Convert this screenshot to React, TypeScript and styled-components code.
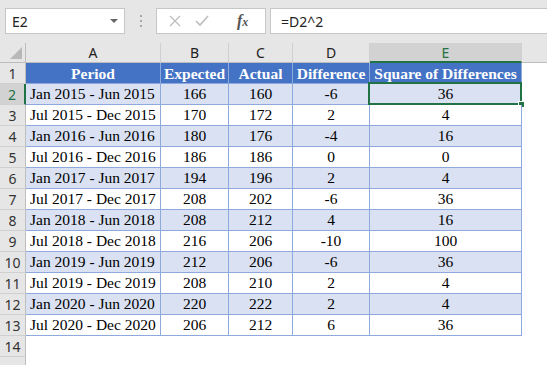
import React from "react";
import styled, { createGlobalStyle } from "styled-components";

const GlobalStyle = createGlobalStyle`
  html, body { margin: 0; padding: 0; background: #fff; }
  body { width: 547px; height: 365px; overflow: hidden; }
`;

const green = "#217346";
const gridBlue = "#8ea9db";
const headGray = "#e6e6e6";

const cols = [
  { key: "A", width: 135 },
  { key: "B", width: 68 },
  { key: "C", width: 64 },
  { key: "D", width: 77 },
  { key: "E", width: 152 },
];

const headers = ["Period", "Expected", "Actual", "Difference", "Square of Differences"];

const data: [string, number, number, number, number][] = [
  ["Jan 2015 - Jun 2015", 166, 160, -6, 36],
  ["Jul 2015 - Dec 2015", 170, 172, 2, 4],
  ["Jan 2016 - Jun 2016", 180, 176, -4, 16],
  ["Jul 2016 - Dec 2016", 186, 186, 0, 0],
  ["Jan 2017 - Jun 2017", 194, 196, 2, 4],
  ["Jul 2017 - Dec 2017", 208, 202, -6, 36],
  ["Jan 2018 - Jun 2018", 208, 212, 4, 16],
  ["Jul 2018 - Dec 2018", 216, 206, -10, 100],
  ["Jan 2019 - Jun 2019", 212, 206, -6, 36],
  ["Jul 2019 - Dec 2019", 208, 210, 2, 4],
  ["Jan 2020 - Jun 2020", 220, 222, 2, 4],
  ["Jul 2020 - Dec 2020", 206, 212, 6, 36],
];

const Page = styled.div`
  width: 547px;
  height: 365px;
  background: ${headGray};
  font-family: "Noto Sans", "Liberation Sans", sans-serif;
  overflow: hidden;
`;

const Toolbar = styled.div`
  height: 43px;
  display: flex;
  align-items: flex-start;
  padding: 8px 0 0 5px;
  box-sizing: border-box;
`;

const NameBox = styled.div`
  width: 120px;
  height: 26px;
  box-sizing: border-box;
  background: #fff;
  border: 1px solid #c6c6c6;
  display: flex;
  align-items: center;
  justify-content: space-between;
  padding: 0 6px 0 6px;
  font-size: 14px;
  color: #222;
`;

const Caret = styled.span`
  width: 0;
  height: 0;
  border-left: 4px solid transparent;
  border-right: 4px solid transparent;
  border-top: 4px solid #666;
`;

const Grip = styled.div`
  width: 31px;
  height: 26px;
  display: flex;
  flex-direction: column;
  align-items: center;
  justify-content: center;
  gap: 3px;
  span {
    width: 2px;
    height: 2px;
    background: #a8a8a8;
  }
`;

const FxButtons = styled.div`
  width: 110px;
  height: 26px;
  box-sizing: border-box;
  background: #fff;
  border: 1px solid #c6c6c6;
  display: flex;
  align-items: center;
  padding-left: 12px;
  gap: 14px;
`;

const Fx = styled.span`
  font-family: "Liberation Serif", serif;
  font-style: italic;
  font-weight: bold;
  font-size: 16px;
  color: #555;
  margin-left: 14px;
  b {
    font-size: 12px;
  }
`;

const FormulaBox = styled.div`
  flex: 1;
  height: 26px;
  margin-left: 4px;
  box-sizing: border-box;
  background: #fff;
  border: 1px solid #c6c6c6;
  border-right: none;
  display: flex;
  align-items: center;
  padding-left: 10px;
  font-size: 14px;
  color: #222;
`;

const Row = styled.div`
  display: flex;
  height: 21px;
`;

const ColHeadRow = styled(Row)`
  height: 20px;
`;

const Corner = styled.div`
  width: 26px;
  height: 20px;
  box-sizing: border-box;
  border-right: 1px solid #bdbdbd;
  border-bottom: 1px solid #bdbdbd;
  position: relative;
  &::after {
    content: "";
    position: absolute;
    right: 3px;
    bottom: 3px;
    width: 0;
    height: 0;
    border-left: 12px solid transparent;
    border-bottom: 12px solid #b8b8b8;
  }
`;

const ColHead = styled.div<{ $w: number; $active?: boolean }>`
  width: ${(p) => p.$w}px;
  flex: none;
  height: 20px;
  box-sizing: border-box;
  border-right: 1px solid #d0d0d0;
  border-bottom: ${(p) => (p.$active ? `2px solid ${green}` : "1px solid #bdbdbd")};
  background: ${(p) => (p.$active ? "#d2d2d2" : headGray)};
  color: ${(p) => (p.$active ? green : "#222")};
  font-size: 14px;
  display: flex;
  align-items: center;
  justify-content: center;
`;

const Filler = styled.div`
  flex: 1;
  height: 20px;
  box-sizing: border-box;
  border-bottom: 1px solid #bdbdbd;
`;

const RowHead = styled.div<{ $active?: boolean }>`
  width: 26px;
  flex: none;
  height: 21px;
  box-sizing: border-box;
  border-right: ${(p) => (p.$active ? `2px solid ${green}` : "1px solid #bdbdbd")};
  border-bottom: 1px solid #d0d0d0;
  background: ${(p) => (p.$active ? "#d2d2d2" : headGray)};
  color: ${(p) => (p.$active ? green : "#333")};
  font-size: 14px;
  display: flex;
  align-items: center;
  justify-content: center;
`;

const Cell = styled.div<{ $w: number; $head?: boolean; $band?: boolean; $left?: boolean }>`
  width: ${(p) => p.$w}px;
  flex: none;
  height: 21px;
  box-sizing: border-box;
  border-right: 1px solid ${gridBlue};
  border-bottom: 1px solid ${gridBlue};
  background: ${(p) => (p.$head ? "#4472c4" : p.$band ? "#d9e1f2" : "#fff")};
  color: ${(p) => (p.$head ? "#fff" : "#000")};
  font-family: "Liberation Serif", "Times New Roman", serif;
  font-size: 15.5px;
  font-weight: ${(p) => (p.$head ? "bold" : "normal")};
  display: flex;
  align-items: center;
  justify-content: ${(p) => (p.$left ? "flex-start" : "center")};
  padding-left: ${(p) => (p.$left ? "4px" : "0")};
  padding-top: ${(p) => (p.$head ? "2px" : "0")};
  white-space: nowrap;
  position: relative;
`;

const Selection = styled.div`
  position: absolute;
  left: -2px;
  top: -2px;
  right: -1px;
  bottom: -1px;
  border: 2px solid ${green};
  pointer-events: none;
  &::after {
    content: "";
    position: absolute;
    right: -5px;
    bottom: -5px;
    width: 5px;
    height: 5px;
    background: ${green};
    border: 1px solid #fff;
  }
`;

const Blank = styled.div`
  flex: 1;
  height: 21px;
  background: #fff;
`;

const Sheet = styled.div`
  background: #fff;
`;

const CrossIcon = () => (
  <svg width="12" height="12" viewBox="0 0 12 12">
    <path d="M1 1 L11 11 M11 1 L1 11" stroke="#bdbdbd" strokeWidth="1.3" fill="none" />
  </svg>
);

const CheckIcon = () => (
  <svg width="14" height="12" viewBox="0 0 14 12">
    <path d="M1 6 L5 10 L13 1" stroke="#bdbdbd" strokeWidth="1.6" fill="none" />
  </svg>
);

export default function App() {
  return (
    <Page>
      <GlobalStyle />
      <Toolbar>
        <NameBox>
          <span>E2</span>
          <Caret />
        </NameBox>
        <Grip>
          <span />
          <span />
          <span />
        </Grip>
        <FxButtons>
          <CrossIcon />
          <CheckIcon />
          <Fx>
            f<b>x</b>
          </Fx>
        </FxButtons>
        <FormulaBox>=D2^2</FormulaBox>
      </Toolbar>
      <ColHeadRow>
        <Corner />
        {cols.map((c) => (
          <ColHead key={c.key} $w={c.width} $active={c.key === "E"}>
            {c.key}
          </ColHead>
        ))}
        <Filler />
      </ColHeadRow>
      <Sheet>
        <Row>
          <RowHead>1</RowHead>
          {headers.map((h, i) => (
            <Cell key={h} $w={cols[i].width} $head>
              {h}
            </Cell>
          ))}
          <Blank />
        </Row>
        {data.map((r, ri) => {
          const rowNo = ri + 2;
          const band = ri % 2 === 0;
          return (
            <Row key={rowNo}>
              <RowHead $active={rowNo === 2}>{rowNo}</RowHead>
              {r.map((v, ci) => (
                <Cell key={ci} $w={cols[ci].width} $band={band} $left={ci === 0}>
                  {v}
                  {rowNo === 2 && ci === 4 && <Selection />}
                </Cell>
              ))}
              <Blank />
            </Row>
          );
        })}
        <Row>
          <RowHead>14</RowHead>
          <Blank />
        </Row>
        <Row>
          <RowHead />
          <Blank />
        </Row>
      </Sheet>
    </Page>
  );
}
